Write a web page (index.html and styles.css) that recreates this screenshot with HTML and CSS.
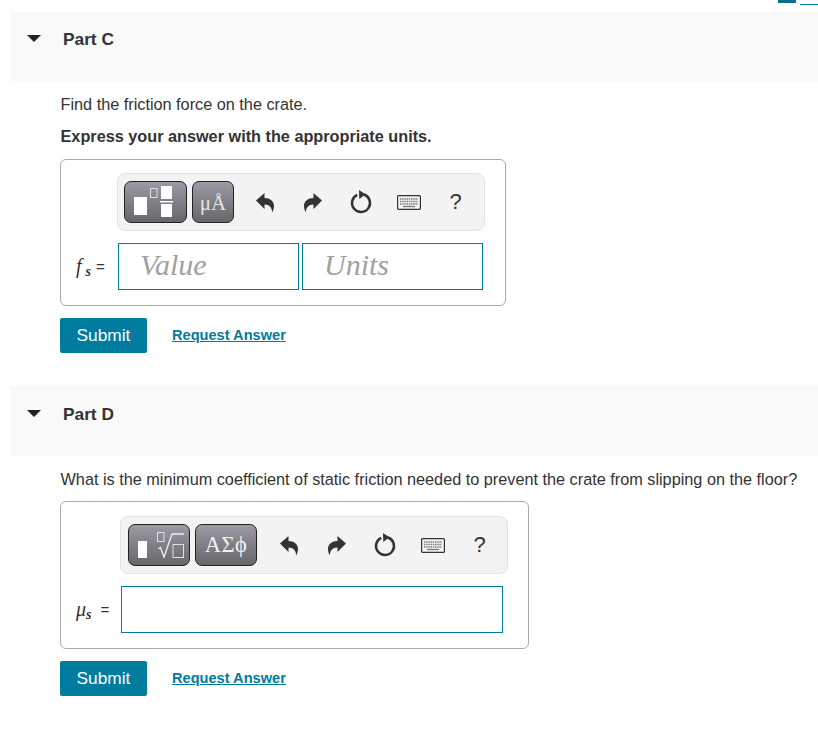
FILE: index.html
```html
<!DOCTYPE html>
<html lang="en">
<head>
<meta charset="utf-8">
<title>Parts C and D</title>
<link rel="stylesheet" href="styles.css">
</head>
<body>
<svg class="defs" width="0" height="0" aria-hidden="true">
  <defs>
    <symbol id="undo" viewBox="0 0 18 21"><path d="M0 8.500 8.500 1v5C14 6 18 9 18 14c0 2.500-.8 4.600-1.800 6.500C16 15.500 13.500 12.500 8.500 12.500V17Z"/></symbol>
    <symbol id="reset" viewBox="0 0 24 26"><path class="ring" d="M15.100 5.500A9 9 0 1 1 8.200 5.800"/><path d="M10 1 16.500 5.200 10.300 10Z"/></symbol>
    <symbol id="keys" viewBox="0 0 24 15">
      <rect class="kb" x=".6" y=".6" width="22.800" height="13.800" rx="1"/>
      <path class="kr" d="M3 4h18M3 6.500h18M3 9h18" stroke-dasharray="1.400 .8"/>
      <path class="ks" d="M6 11.500h12"/>
    </symbol>
  </defs>
</svg>
<div class="topbar">
  <span class="top-icon"></span>
  <span class="top-link"></span>
</div>

<section class="part part-c">
  <header class="part-head"><span class="caret"></span><h2 class="part-title">Part C</h2></header>
  <div class="part-body">
    <p class="prompt">Find the friction force on the crate.</p>
    <p class="prompt strong">Express your answer with the appropriate units.</p>
    <div class="answer answer-c">
      <div class="toolbar toolbar-c">
        <button class="mbtn wide"><svg class="mi" width="63" height="42" viewBox="0 0 63 42"><rect class="w" x="10" y="16" width="13" height="18"/><rect class="o" x="26.500" y="7.500" width="6.500" height="9"/><rect class="w" x="37" y="5" width="11" height="13"/><rect class="w" x="36" y="20" width="13" height="1.500"/><rect class="w" x="37" y="23" width="11" height="13"/></svg></button>
        <button class="mbtn narrow glyph-small">μÅ</button>
        <div class="tools">
          <svg class="ic ic-undo"><use href="#undo"/></svg>
          <svg class="ic ic-undo flip"><use href="#undo"/></svg>
          <svg class="ic ic-reset"><use href="#reset"/></svg>
          <svg class="ic ic-keys"><use href="#keys"/></svg>
          <span class="help">?</span>
        </div>
      </div>
      <div class="fields">
        <span class="label label-c"><i>f<sub>s</sub></i><span class="eq">=</span></span>
        <div class="field half">Value</div>
        <div class="field half">Units</div>
      </div>
    </div>
    <div class="actions"><button class="submit">Submit</button><a class="req" href="#">Request Answer</a></div>
  </div>
</section>

<section class="part part-d">
  <header class="part-head"><span class="caret"></span><h2 class="part-title">Part D</h2></header>
  <div class="part-body">
    <p class="prompt">What is the minimum coefficient of static friction needed to prevent the crate from slipping on the floor?</p>
    <div class="answer answer-d">
      <div class="toolbar toolbar-d">
        <button class="mbtn wide-d"><svg class="mi" width="62" height="42" viewBox="0 0 62 42"><rect class="w" x="10" y="17" width="9" height="17"/><rect class="o" x="29.500" y="8.500" width="6.500" height="9"/><path class="rad" d="M30.500 25l2-1.500 3.500 9.500 8-23h12"/><rect class="o" x="45" y="20.500" width="10.500" height="13"/></svg></button>
        <button class="mbtn wide-d glyph-big">ΑΣϕ</button>
        <div class="tools">
          <svg class="ic ic-undo"><use href="#undo"/></svg>
          <svg class="ic ic-undo flip"><use href="#undo"/></svg>
          <svg class="ic ic-reset"><use href="#reset"/></svg>
          <svg class="ic ic-keys"><use href="#keys"/></svg>
          <span class="help">?</span>
        </div>
      </div>
      <div class="fields">
        <span class="label label-d"><i>μ<sub>s</sub></i><span class="eq">=</span></span>
        <div class="field full"></div>
      </div>
    </div>
    <div class="actions"><button class="submit">Submit</button><a class="req" href="#">Request Answer</a></div>
  </div>
</section>
</body>
</html>
```

FILE: styles.css
```css
* { box-sizing: border-box; }
html, body { margin: 0; padding: 0; }
body {
  width: 818px;
  height: 730px;
  overflow: hidden;
  background: #fff;
  color: #333;
  font-family: "Liberation Sans", Arial, sans-serif;
  font-size: 16px;
}
.defs { display: block; height: 0; }

.topbar { height: 12px; display: flex; justify-content: flex-end; align-items: flex-start; gap: 4px; }
.top-icon { width: 18px; height: 3px; background: #0b6f8c; }
.top-link { width: 18px; height: 5px; border-bottom: 1px solid #007c9e; }

.part { margin-left: 10px; }
.part-d { margin-top: 33px; }
.part-head {
  height: 69px;
  background: #f9f9f9;
  display: flex;
  align-items: flex-start;
  padding: 18px 0 0 17px;
}
.part-d .part-head { height: 70px; padding-top: 19px; }
.caret {
  width: 0;
  height: 0;
  margin-top: 5px;
  border-left: 7px solid transparent;
  border-right: 7px solid transparent;
  border-top: 7px solid #222;
}
.part-title { margin: 0 0 0 22px; font-size: 17.300px; line-height: 18px; font-weight: 700; color: #333; }

.part-body { padding-left: 50.500px; }
.prompt { margin: 0; padding-top: 14px; font-size: 16.260px; line-height: 18px; color: #333; white-space: nowrap; }
.prompt.strong { font-weight: 700; }

.answer { margin-left: -.5px; border: 1px solid #aaa; border-radius: 6px; background: #fff; }
.answer-c { margin-top: 14px; width: 446px; height: 147px; padding: 13px 0 0 56px; }
.answer-d { margin-top: 13px; width: 469px; height: 148px; padding: 14px 0 0 59px; }

.toolbar {
  display: flex;
  align-items: center;
  height: 58px;
  background: #f3f3f3;
  border: 1px solid #e3e3e3;
  border-radius: 8px;
  padding-left: 6px;
}
.toolbar-c { width: 368px; }
.toolbar-d { width: 388px; padding-left: 7px; }

.mbtn {
  height: 42px;
  padding: 0;
  margin-right: 5px;
  border: 1px solid #222;
  border-radius: 7px;
  background: linear-gradient(#9c9aa3, #66666a);
  font-family: "Liberation Serif", "Times New Roman", serif;
  color: #e4e4e4;
  display: flex;
  align-items: center;
  justify-content: center;
  overflow: hidden;
}
.wide { width: 63px; }
.narrow { width: 42px; }
.wide-d { width: 62px; }
.mi { display: block; flex: none; margin: -1px; }
.mi .w { fill: #fff; }
.mi .o { fill: none; stroke: #e0e0e0; stroke-width: 1; }
.mi .rad { fill: none; stroke: #f0f0f0; stroke-width: 1.300; }
.glyph-small { font-size: 21px; padding-top: 3px; }
.glyph-big { font-size: 22.500px; color: #f2f2f2; letter-spacing: .5px; }

.tools { display: flex; align-items: center; margin-left: 1.500px; }
.toolbar-d .tools { margin-left: 2.500px; }
.ic { display: block; margin: 0 auto; fill: #333; }
.ic-undo { width: 48px; height: 21px; }
.flip { transform: scaleX(-1); }
.ic-reset { width: 48px; height: 26px; }
.ic-keys { width: 48px; height: 15px; }
.ring { fill: none; stroke: #333; stroke-width: 2.500; }
.kb { fill: #f4f4f4; stroke: #333; stroke-width: 1.200; }
.kr { fill: none; stroke: #777; stroke-width: 1.300; }
.ks { fill: none; stroke: #777; stroke-width: 1.300; }
.help { width: 48px; margin-left: -1px; text-align: center; font-size: 22px; line-height: 24px; color: #333; }

.fields { display: flex; align-items: center; margin-top: 12px; }
.label {
  display: flex;
  align-items: center;
  font-family: "Liberation Serif", "Times New Roman", serif;
  font-size: 20px;
  color: #333;
  white-space: nowrap;
}
.label i { font-weight: 400; }
.label sub { font-size: 14px; line-height: 0; vertical-align: -3px; font-weight: 700; }
.eq { font-family: "Liberation Sans", Arial, sans-serif; font-size: 15px; }
.label-c { width: 57px; margin-left: -56px; padding-left: 15px; }
.label-c sub { margin-left: 4px; }
.label-c .eq { margin-left: 5px; }
.label-d { width: 60px; margin-left: -59px; padding-left: 15px; }
.label-d .eq { margin-left: 9px; }

.field {
  height: 47px;
  border: 1px solid #007c9e;
  background: #fff;
  font-family: "Liberation Serif", "Times New Roman", serif;
  font-style: italic;
  font-size: 30px;
  line-height: 42px;
  color: #a0a0a0;
}
.half { width: 181px; padding-left: 21px; margin-right: 3px; }
.full { width: 382px; }

.actions { margin-left: -.5px; display: flex; align-items: center; margin-top: 12px; }
.submit {
  width: 87px;
  height: 35px;
  padding: 0;
  border: 0;
  border-radius: 2px;
  background: #007c9e;
  color: #fff;
  font-family: "Liberation Sans", Arial, sans-serif;
  font-size: 17.300px;
}
.req {
  margin-left: 25px;
  margin-top: -2px;
  color: #007c9e;
  font-size: 14.600px;
  font-weight: 700;
  text-decoration: underline;
  white-space: nowrap;
}
```
